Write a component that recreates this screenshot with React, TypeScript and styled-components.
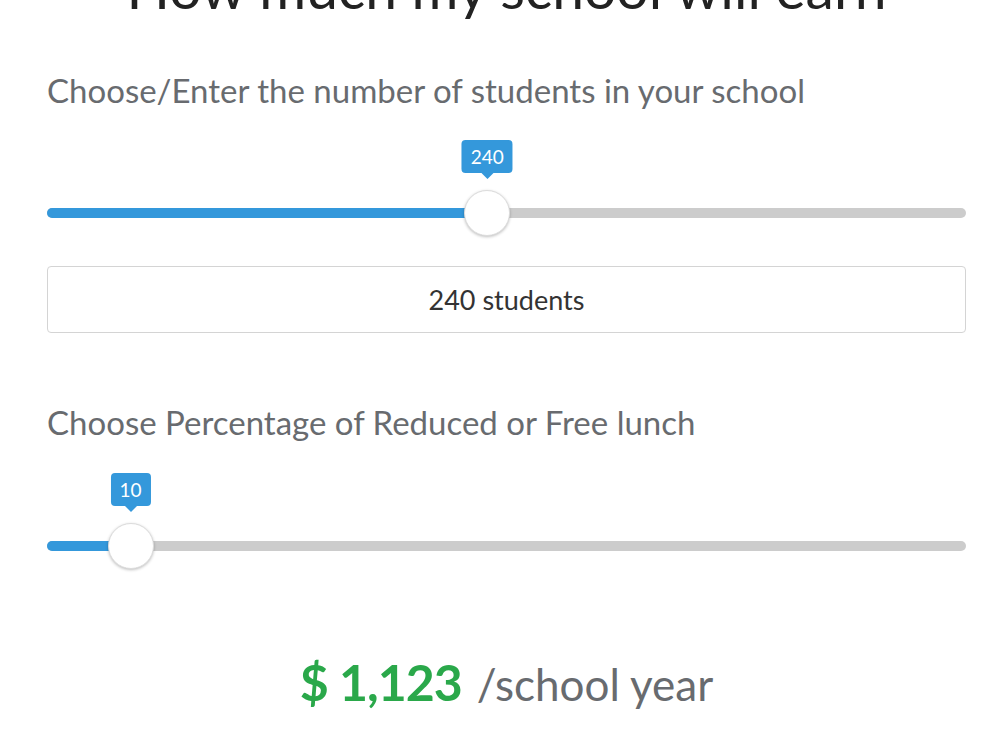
import React from "react";
import styled, { createGlobalStyle } from "styled-components";

const GlobalStyle = createGlobalStyle`
  body {
    margin: 0;
    background: #fff;
    font-family: Lato, "Open Sans", sans-serif;
  }
`;

const Page = styled.div`
  padding: 0 34px 0 47px;
  overflow: hidden;
  height: 750px;
  box-sizing: border-box;
`;

const Title = styled.h1`
  margin: -41px 0 0;
  font-size: 57px;
  line-height: 1;
  font-weight: 400;
  color: #222;
  text-align: center;
  white-space: nowrap;
`;

const Label = styled.div<{ $gap: number }>`
  margin-top: ${(p) => p.$gap}px;
  font-size: 33px;
  line-height: 37px;
  color: #686b6f;
`;

const SliderWrap = styled.div<{ $gap: number }>`
  position: relative;
  margin-top: ${(p) => p.$gap}px;
  padding-top: 68px;
  height: 32px;
`;

const Track = styled.div`
  height: 10px;
  border-radius: 5px;
  background: #cccccc;
  overflow: hidden;
`;

const Fill = styled.div`
  height: 100%;
  background: #3498db;
`;

const Handle = styled.div`
  position: absolute;
  top: 50px;
  width: 46px;
  height: 46px;
  margin-left: -23px;
  border-radius: 50%;
  background: #fff;
  border: 1px solid #dcdcdc;
  box-sizing: border-box;
  box-shadow: 0 1px 3px rgba(0, 0, 0, 0.25);
`;

const Tip = styled.div`
  position: absolute;
  top: 0;
  transform: translateX(-50%);
  height: 33px;
  padding: 0 9px;
  border-radius: 4px;
  background: #3498db;
  color: #fff;
  font-size: 19px;
  line-height: 33px;
  white-space: nowrap;

  &::after {
    content: "";
    position: absolute;
    left: 50%;
    bottom: -6px;
    margin-left: -6px;
    border-left: 6px solid transparent;
    border-right: 6px solid transparent;
    border-top: 6px solid #3498db;
  }
`;

const Count = styled.div`
  margin-top: 26px;
  height: 67px;
  box-sizing: border-box;
  border: 1px solid #d4d4d4;
  border-radius: 4px;
  display: flex;
  align-items: center;
  justify-content: center;
  font-size: 27px;
  color: #333;
`;

const Result = styled.div`
  margin-top: 79px;
  display: flex;
  align-items: baseline;
  justify-content: center;
  gap: 15px;
`;

const Amount = styled.span`
  font-size: 50px;
  font-weight: 700;
  letter-spacing: -1px;
  color: #2aa84a;
`;

const Per = styled.span`
  font-size: 44px;
  color: #686b6f;
`;

type SliderProps = { value: number; min: number; max: number; gap: number };

function Slider({ value, min, max, gap }: SliderProps) {
  const pct = ((value - min) / (max - min)) * 100;
  return (
    <SliderWrap $gap={gap}>
      <Tip style={{ left: `${pct}%` }}>{value}</Tip>
      <Track>
        <Fill style={{ width: `${pct}%` }} />
      </Track>
      <Handle style={{ left: `${pct}%` }} />
    </SliderWrap>
  );
}

export default function App() {
  return (
    <>
      <GlobalStyle />
      <Page>
        <Title>How much my school will earn</Title>
        <Label $gap={56}>Choose/Enter the number of students in your school</Label>
        <Slider value={240} min={1} max={500} gap={31} />
        <Count>240 students</Count>
        <Label $gap={71}>Choose Percentage of Reduced or Free lunch</Label>
        <Slider value={10} min={1} max={100} gap={32} />
        <Result>
          <Amount>$ 1,123</Amount>
          <Per>/school year</Per>
        </Result>
      </Page>
    </>
  );
}
